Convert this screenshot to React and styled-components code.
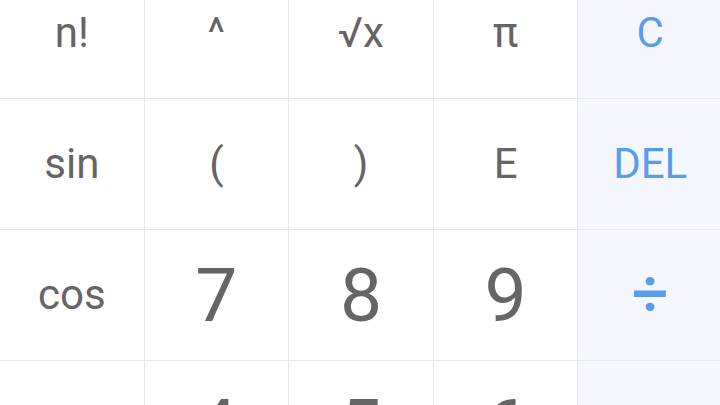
import styled, { createGlobalStyle } from "styled-components"

const GlobalStyle = createGlobalStyle`
  html, body {
    margin: 0;
    padding: 0;
    background: #ffffff;
    overflow: hidden;
  }
  body {
    font-family: Roboto, "Noto Sans", sans-serif;
  }
`;

const Keypad = styled.div`
  display: grid;
  grid-template-columns: repeat(5, 1fr);
  grid-auto-rows: 130px;
  gap: 1px;
  margin-top: -32px;
  background-color: #e8e8e8;
  width: 722px;
`;

const sizes = { label: "42px", digit: "75px", sign: "64px" };

const Key = styled.button`
  border: none;
  margin: 0;
  padding: 0;
  display: flex;
  align-items: center;
  justify-content: center;
  font-family: Roboto, "Noto Sans", sans-serif;
  font-weight: ${(p) => (p.$kind === "sign" ? 500 : 400)};
  line-height: 1;
  cursor: pointer;
  background-color: ${(p) => (p.$op ? "#f4f8fe" : "#ffffff")};
  color: ${(p) => (p.$op ? "#5b9bec" : "#656565")};
  font-size: ${(p) => sizes[p.$kind]};
`;

const rows = [
  ["n!", "^", "√x", "π", "C"],
  ["sin", "(", ")", "E", "DEL"],
  ["cos", "7", "8", "9", "÷"],
  ["tan", "4", "5", "6", "×"],
  ["ln", "1", "2", "3", "−"],
  ["log", "%", "0", ".", "+"],
];

const kindOf = (r, c) => {
  if (c === 4 && r >= 2) return "sign"
  if (c > 0 && c < 4 && r >= 2) return "digit"
  return "label"
}

const Calculator = () => {
  return (
    <Keypad>
      {rows.map((row, r) =>
        row.map((label, c) => (
          <Key key={`${r}-${c}`} $op={c === 4} $kind={kindOf(r, c)}>
            {label}
          </Key>
        ))
      )}
    </Keypad>
  )
}

export default function App() {
  return (
    <>
      <GlobalStyle />
      <Calculator />
    </>
  )
}
